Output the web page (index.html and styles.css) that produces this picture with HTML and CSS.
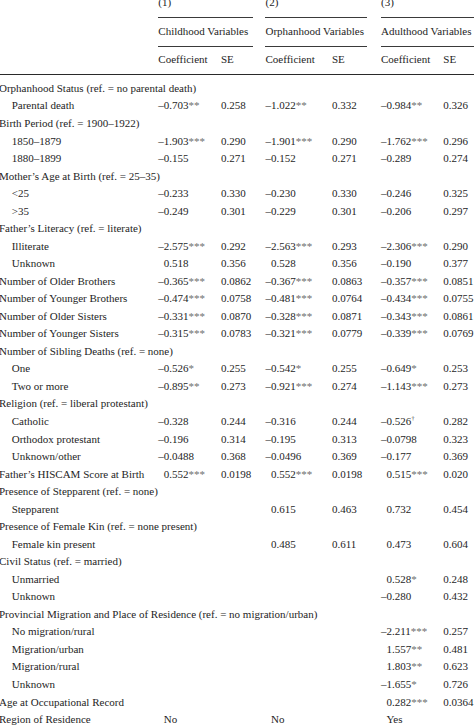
FILE: index.html
```html
<!DOCTYPE html>
<html lang="en">
<head>
<meta charset="utf-8">
<title>Regression table</title>
<link rel="stylesheet" href="styles.css">
</head>
<body>
<div class="page">
  <div class="table">
    <div class="hrow">
      <div class="hlab"></div>
      <div class="hcell g1">(1)</div>
      <div class="hcell g2">(2)</div>
      <div class="hcell g3">(3)</div>
    </div>
    <div class="hrow">
      <div class="hlab"></div>
      <div class="hcell g1">Childhood Variables</div>
      <div class="hcell g2">Orphanhood Variables</div>
      <div class="hcell g3">Adulthood Variables</div>
    </div>
    <div class="row colhead">
      <div></div>
      <div>Coefficient</div><div>SE</div>
      <div>Coefficient</div><div>SE</div>
      <div>Coefficient</div><div>SE</div>
    </div>

    <div class="body">
      <div class="row"><div class="lab">Orphanhood Status (ref. = no parental death)</div></div>
      <div class="row"><div class="lab ind">Parental death</div><div>–0.703<span class="s">**</span></div><div>0.258</div><div>–1.022<span class="s">**</span></div><div>0.332</div><div>–0.984<span class="s">**</span></div><div>0.326</div></div>
      <div class="row"><div class="lab">Birth Period (ref. = 1900–1922)</div></div>
      <div class="row"><div class="lab ind">1850–1879</div><div>–1.903<span class="s">***</span></div><div>0.290</div><div>–1.901<span class="s">***</span></div><div>0.290</div><div>–1.762<span class="s">***</span></div><div>0.296</div></div>
      <div class="row"><div class="lab ind">1880–1899</div><div>–0.155</div><div>0.271</div><div>–0.152</div><div>0.271</div><div>–0.289</div><div>0.274</div></div>
      <div class="row"><div class="lab">Mother’s Age at Birth (ref. = 25–35)</div></div>
      <div class="row"><div class="lab ind">&lt;25</div><div>–0.233</div><div>0.330</div><div>–0.230</div><div>0.330</div><div>–0.246</div><div>0.325</div></div>
      <div class="row"><div class="lab ind">&gt;35</div><div>–0.249</div><div>0.301</div><div>–0.229</div><div>0.301</div><div>–0.206</div><div>0.297</div></div>
      <div class="row"><div class="lab">Father’s Literacy (ref. = literate)</div></div>
      <div class="row"><div class="lab ind">Illiterate</div><div>–2.575<span class="s">***</span></div><div>0.292</div><div>–2.563<span class="s">***</span></div><div>0.293</div><div>–2.306<span class="s">***</span></div><div>0.290</div></div>
      <div class="row"><div class="lab ind">Unknown</div><div class="p">0.518</div><div>0.356</div><div class="p">0.528</div><div>0.356</div><div>–0.190</div><div>0.377</div></div>
      <div class="row"><div class="lab">Number of Older Brothers</div><div>–0.365<span class="s">***</span></div><div>0.0862</div><div>–0.367<span class="s">***</span></div><div>0.0863</div><div>–0.357<span class="s">***</span></div><div>0.0851</div></div>
      <div class="row"><div class="lab">Number of Younger Brothers</div><div>–0.474<span class="s">***</span></div><div>0.0758</div><div>–0.481<span class="s">***</span></div><div>0.0764</div><div>–0.434<span class="s">***</span></div><div>0.0755</div></div>
      <div class="row"><div class="lab">Number of Older Sisters</div><div>–0.331<span class="s">***</span></div><div>0.0870</div><div>–0.328<span class="s">***</span></div><div>0.0871</div><div>–0.343<span class="s">***</span></div><div>0.0861</div></div>
      <div class="row"><div class="lab">Number of Younger Sisters</div><div>–0.315<span class="s">***</span></div><div>0.0783</div><div>–0.321<span class="s">***</span></div><div>0.0779</div><div>–0.339<span class="s">***</span></div><div>0.0769</div></div>
      <div class="row"><div class="lab">Number of Sibling Deaths (ref. = none)</div></div>
      <div class="row"><div class="lab ind">One</div><div>–0.526<span class="s">*</span></div><div>0.255</div><div>–0.542<span class="s">*</span></div><div>0.255</div><div>–0.649<span class="s">*</span></div><div>0.253</div></div>
      <div class="row"><div class="lab ind">Two or more</div><div>–0.895<span class="s">**</span></div><div>0.273</div><div>–0.921<span class="s">***</span></div><div>0.274</div><div>–1.143<span class="s">***</span></div><div>0.273</div></div>
      <div class="row"><div class="lab">Religion (ref. = liberal protestant)</div></div>
      <div class="row"><div class="lab ind">Catholic</div><div>–0.328</div><div>0.244</div><div>–0.316</div><div>0.244</div><div>–0.526<sup class="dg">†</sup></div><div>0.282</div></div>
      <div class="row"><div class="lab ind">Orthodox protestant</div><div>–0.196</div><div>0.314</div><div>–0.195</div><div>0.313</div><div>–0.0798</div><div>0.323</div></div>
      <div class="row"><div class="lab ind">Unknown/other</div><div>–0.0488</div><div>0.368</div><div>–0.0496</div><div>0.369</div><div>–0.177</div><div>0.369</div></div>
      <div class="row"><div class="lab">Father’s HISCAM Score at Birth</div><div class="p">0.552<span class="s">***</span></div><div>0.0198</div><div class="p">0.552<span class="s">***</span></div><div>0.0198</div><div class="p">0.515<span class="s">***</span></div><div>0.020</div></div>
      <div class="row"><div class="lab">Presence of Stepparent (ref. = none)</div></div>
      <div class="row"><div class="lab ind">Stepparent</div><div></div><div></div><div class="p">0.615</div><div>0.463</div><div class="p">0.732</div><div>0.454</div></div>
      <div class="row"><div class="lab">Presence of Female Kin (ref. = none present)</div></div>
      <div class="row"><div class="lab ind">Female kin present</div><div></div><div></div><div class="p">0.485</div><div>0.611</div><div class="p">0.473</div><div>0.604</div></div>
      <div class="row"><div class="lab">Civil Status (ref. = married)</div></div>
      <div class="row"><div class="lab ind">Unmarried</div><div></div><div></div><div></div><div></div><div class="p">0.528<span class="s">*</span></div><div>0.248</div></div>
      <div class="row"><div class="lab ind">Unknown</div><div></div><div></div><div></div><div></div><div>–0.280</div><div>0.432</div></div>
      <div class="row"><div class="lab">Provincial Migration and Place of Residence (ref. = no migration/urban)</div></div>
      <div class="row"><div class="lab ind">No migration/rural</div><div></div><div></div><div></div><div></div><div>–2.211<span class="s">***</span></div><div>0.257</div></div>
      <div class="row"><div class="lab ind">Migration/urban</div><div></div><div></div><div></div><div></div><div class="p">1.557<span class="s">**</span></div><div>0.481</div></div>
      <div class="row"><div class="lab ind">Migration/rural</div><div></div><div></div><div></div><div></div><div class="p">1.803<span class="s">**</span></div><div>0.623</div></div>
      <div class="row"><div class="lab ind">Unknown</div><div></div><div></div><div></div><div></div><div>–1.655<span class="s">*</span></div><div>0.726</div></div>
      <div class="row"><div class="lab">Age at Occupational Record</div><div></div><div></div><div></div><div></div><div class="p">0.282<span class="s">***</span></div><div>0.0364</div></div>
      <div class="row"><div class="lab">Region of Residence</div><div class="p">No</div><div></div><div class="p">No</div><div></div><div class="p">Yes</div><div></div></div>
    </div>
  </div>
</div>
</body>
</html>
```

FILE: styles.css
```css
html, body {
  margin: 0;
  padding: 0;
  background: #ffffff;
}

body {
  font-family: "Liberation Serif", "Times New Roman", serif;
  font-size: 11px;
  color: #1e1e1e;
  overflow: hidden;
}

.page {
  width: 474px;
  height: 727px;
  overflow: hidden;
}

.table {
  margin-top: -10.2px;
}

.hrow {
  display: grid;
  grid-template-columns: 158.3px 107.2px 115.5px 93px;
  white-space: nowrap;
}

.hcell {
  padding: 4.5px 0 5.5px;
  line-height: 17.54px;
  border-bottom: 1px solid #3a3a3a;
}

.g1 {
  margin-right: 12.8px;
}

.g2 {
  margin-right: 14px;
}

.row {
  display: grid;
  grid-template-columns: 158.3px 62.7px 44.5px 66.5px 49px 62.3px 40px;
  height: 17.54px;
  line-height: 17.54px;
  white-space: nowrap;
}

.colhead {
  padding: 4.5px 0 5.3px;
  border-bottom: 1.5px solid #2a2a2a;
}

.body {
  padding-top: 4.7px;
}

.lab {
  text-indent: -1px;
  overflow: visible;
}

.ind {
  padding-left: 12.7px;
}

.p {
  padding-left: 0.5em;
}

.s {
  color: #6e6e6e;
}

.dg {
  font-size: 0.65em;
  line-height: 0;
  color: #555;
}
```
